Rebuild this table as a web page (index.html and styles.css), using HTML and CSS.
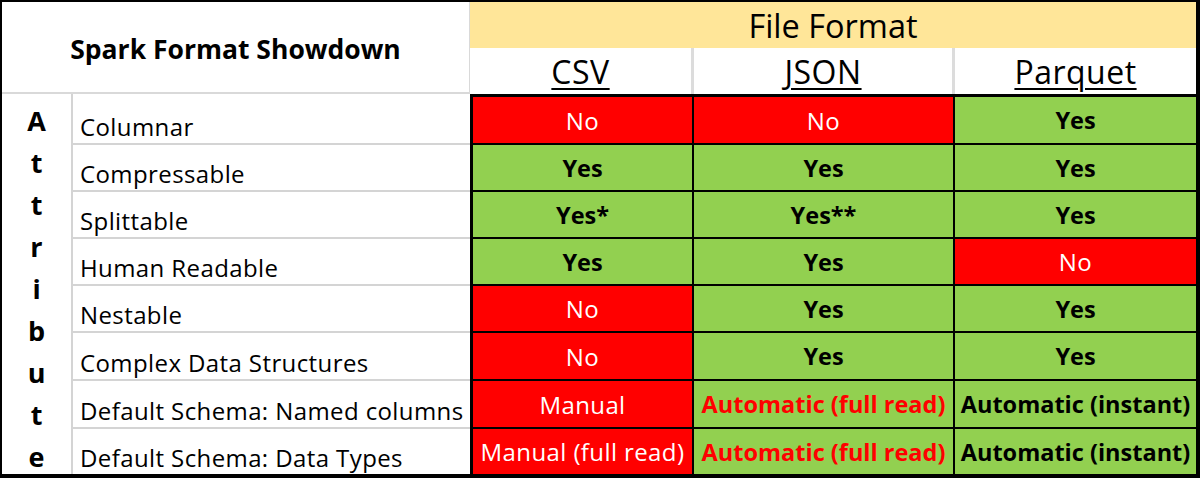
FILE: index.html
```html
<!DOCTYPE html>
<html>
<head>
<meta charset="utf-8">
<link rel="stylesheet" href="styles.css">
</head>
<body>
<div class="sheet">
  <div class="title">Spark Format Showdown</div>
  <div class="ff">File Format</div>
  <div class="fmt sep">CSV</div>
  <div class="fmt sep">JSON</div>
  <div class="fmt">Parquet</div>
  <div class="attr"><span>A</span><span>t</span><span>t</span><span>r</span><span>i</span><span>b</span><span>u</span><span>t</span><span>e</span></div>

  <div class="label">Columnar</div>
  <div class="cell first top red">No</div>
  <div class="cell top red">No</div>
  <div class="cell last top green">Yes</div>

  <div class="label">Compressable</div>
  <div class="cell first green">Yes</div>
  <div class="cell green">Yes</div>
  <div class="cell last green">Yes</div>

  <div class="label">Splittable</div>
  <div class="cell first green">Yes*</div>
  <div class="cell green">Yes**</div>
  <div class="cell last green">Yes</div>

  <div class="label">Human Readable</div>
  <div class="cell first green">Yes</div>
  <div class="cell green">Yes</div>
  <div class="cell last red">No</div>

  <div class="label">Nestable</div>
  <div class="cell first red">No</div>
  <div class="cell green">Yes</div>
  <div class="cell last green">Yes</div>

  <div class="label">Complex Data Structures</div>
  <div class="cell first red">No</div>
  <div class="cell green">Yes</div>
  <div class="cell last green">Yes</div>

  <div class="label">Default Schema: Named columns</div>
  <div class="cell first red">Manual</div>
  <div class="cell green warn">Automatic (full read)</div>
  <div class="cell last green">Automatic (instant)</div>

  <div class="label end">Default Schema: Data Types</div>
  <div class="cell first end red">Manual (full read)</div>
  <div class="cell end green warn">Automatic (full read)</div>
  <div class="cell last end green">Automatic (instant)</div>
</div>
</body>
</html>
```

FILE: styles.css
```css
html, body {
  margin: 0;
  padding: 0;
  background: #fff;
}

.sheet {
  width: 1200px;
  height: 478px;
  box-sizing: border-box;
  border-style: solid;
  border-color: #000;
  border-width: 2px 4px 4px 2px;
  display: grid;
  grid-template-columns: 71px 397px 224px 261px 241px;
  grid-template-rows: 46px 46px 51px 47px 47px 47px 47px 48px 48px 45px;
  font-family: "Open Sans", "Noto Sans", sans-serif;
  color: #000;
  background: #fff;
}

.title {
  grid-column: 1 / 3;
  grid-row: 1 / 3;
  display: flex;
  align-items: center;
  justify-content: center;
  font-weight: 700;
  font-size: 26.5px;
  border-bottom: 2px solid #d9d9d9;
  border-right: 1px solid #d9d9d9;
  padding-top: 3px;
  box-sizing: border-box;
}

.ff {
  grid-column: 3 / 6;
  grid-row: 1;
  background: #ffe699;
  display: flex;
  align-items: center;
  justify-content: center;
  font-size: 32.5px;
}

.fmt {
  grid-row: 2;
  display: flex;
  align-items: center;
  justify-content: center;
  font-size: 32px;
  letter-spacing: 0.5px;
  text-decoration: underline;
  text-decoration-thickness: 2px;
  text-underline-offset: 4px;
}

.fmt.sep {
  border-right: 3px solid #dcdcdc;
}

.attr {
  grid-column: 1;
  grid-row: 3 / 11;
  border-right: 2px solid #d4d4d4;
  display: flex;
  flex-direction: column;
  align-items: center;
  padding-top: 6px;
  font-weight: 700;
  font-size: 27px;
}

.attr span {
  display: block;
  height: 42px;
  line-height: 42px;
}

.label {
  display: flex;
  align-items: flex-end;
  padding: 0 0 0 7px;
  font-size: 24px;
  letter-spacing: 0.4px;
  border-bottom: 2px solid #d4d4d4;
  white-space: nowrap;
}

.cell {
  display: flex;
  align-items: center;
  justify-content: center;
  font-size: 24px;
  letter-spacing: 0.4px;
  border-right: 2px solid #000;
  border-bottom: 2px solid #000;
  white-space: nowrap;
}

.cell.first {
  border-left: 3px solid #000;
}

.cell.top {
  border-top: 3px solid #000;
}

.cell.last {
  border-right: none;
}

.end {
  border-bottom: none;
}

.red {
  background: #ff0000;
  color: #fff;
}

.green {
  background: #92d050;
  color: #000;
  font-weight: 700;
  font-size: 23.5px;
  letter-spacing: 0;
}

.green.warn {
  color: #ff0000;
}
```
